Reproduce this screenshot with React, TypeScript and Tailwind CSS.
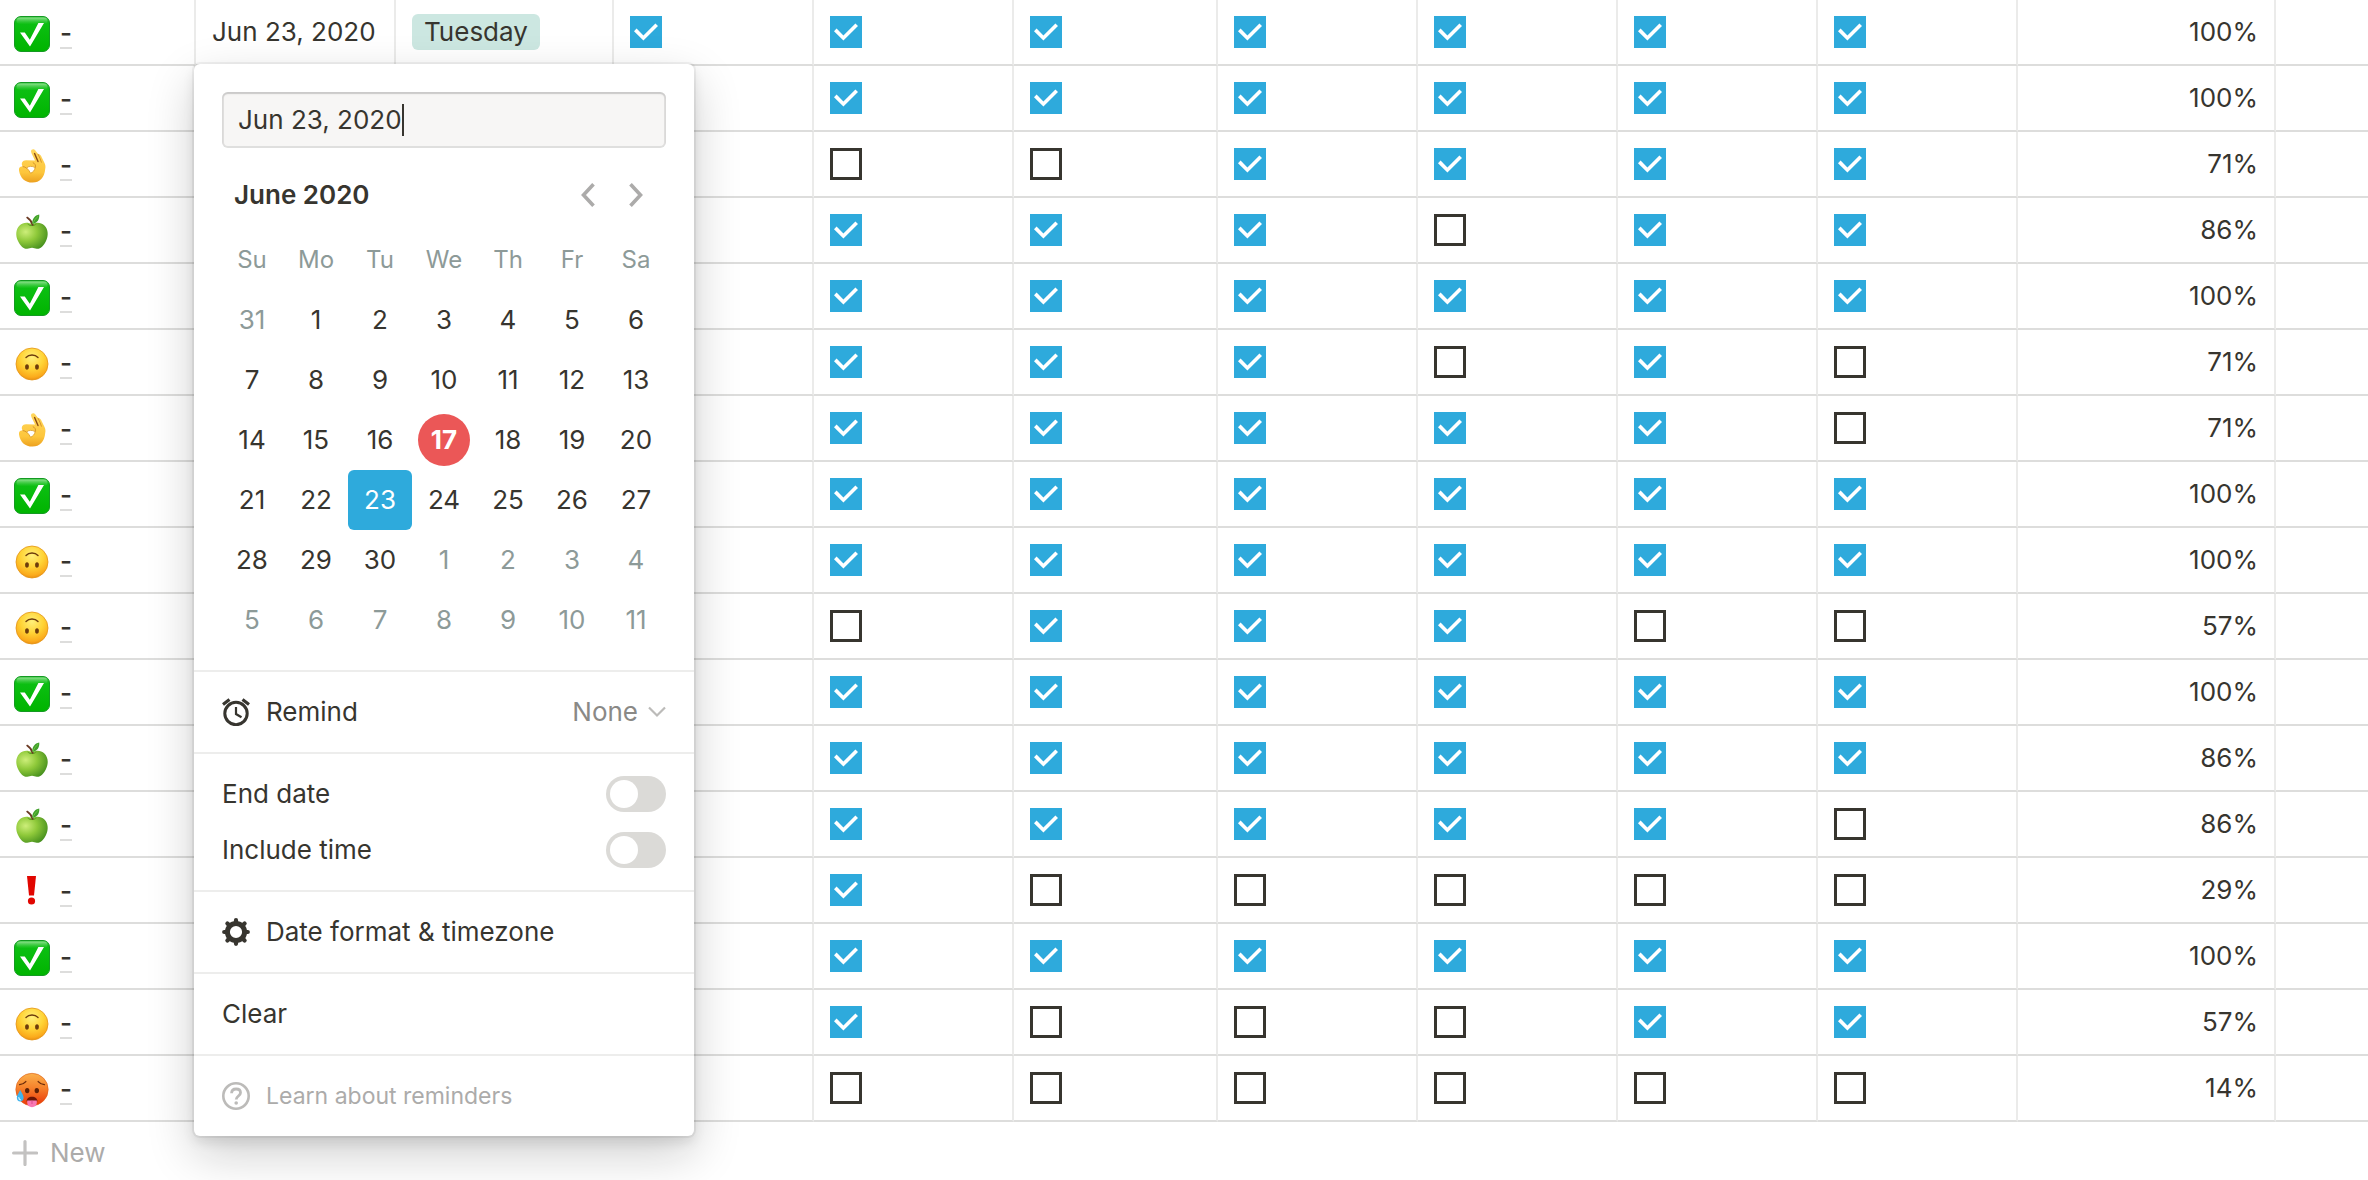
import type { ReactNode } from "react";

type Mood = "check" | "ok" | "apple" | "upside" | "bang" | "hot";

// One entry per table row: icon, seven habit boxes, progress.
const rows: { mood: Mood; habits: string; progress: string }[] = [
  { mood: "check", habits: "1111111", progress: "100%" },
  { mood: "check", habits: "1111111", progress: "100%" },
  { mood: "ok", habits: "1001111", progress: "71%" },
  { mood: "apple", habits: "1111011", progress: "86%" },
  { mood: "check", habits: "1111111", progress: "100%" },
  { mood: "upside", habits: "1111010", progress: "71%" },
  { mood: "ok", habits: "0111110", progress: "71%" },
  { mood: "check", habits: "1111111", progress: "100%" },
  { mood: "upside", habits: "1111111", progress: "100%" },
  { mood: "upside", habits: "1011100", progress: "57%" },
  { mood: "check", habits: "1111111", progress: "100%" },
  { mood: "apple", habits: "0111111", progress: "86%" },
  { mood: "apple", habits: "1111110", progress: "86%" },
  { mood: "bang", habits: "1100000", progress: "29%" },
  { mood: "check", habits: "1111111", progress: "100%" },
  { mood: "upside", habits: "1100011", progress: "57%" },
  { mood: "hot", habits: "1000000", progress: "14%" },
];

const weekdays = ["Su", "Mo", "Tu", "We", "Th", "Fr", "Sa"];

const days = [
  { day: 31, outside: true },
  ...Array.from({ length: 30 }, (_, i) => ({ day: i + 1, outside: false })),
  ...Array.from({ length: 11 }, (_, i) => ({ day: i + 1, outside: true })),
];

function EmojiDefs() {
  return (
    <svg className="absolute h-0 w-0" aria-hidden="true">
      <defs>
        <linearGradient id="green" x1="0" y1="0" x2="0" y2="1">
          <stop offset="0" stopColor="#2fc437" />
          <stop offset="0.2" stopColor="#0cbf12" />
          <stop offset="1" stopColor="#00b400" />
        </linearGradient>
        <linearGradient id="gloss" x1="0" y1="0" x2="0" y2="1">
          <stop offset="0" stopColor="#8fe08f" />
          <stop offset="1" stopColor="#2ac72e" stopOpacity="0.2" />
        </linearGradient>
        <radialGradient id="face" cx="0.5" cy="0.3" r="0.72">
          <stop offset="0" stopColor="#fff07a" />
          <stop offset="0.5" stopColor="#ffd335" />
          <stop offset="0.85" stopColor="#fbab1c" />
          <stop offset="1" stopColor="#e88a10" />
        </radialGradient>
        <linearGradient id="heat" x1="0" y1="0" x2="0" y2="1">
          <stop offset="0" stopColor="#fbb04c" />
          <stop offset="0.45" stopColor="#f6822c" />
          <stop offset="1" stopColor="#ea3408" />
        </linearGradient>
        <radialGradient id="apple" cx="0.3" cy="0.35" r="0.8">
          <stop offset="0" stopColor="#cdee7a" />
          <stop offset="0.45" stopColor="#8fc93a" />
          <stop offset="1" stopColor="#3f8a1b" />
        </radialGradient>
        <linearGradient id="hand" x1="0" y1="0" x2="0" y2="1">
          <stop offset="0" stopColor="#ffd75e" />
          <stop offset="0.7" stopColor="#fdc63c" />
          <stop offset="1" stopColor="#eca01f" />
        </linearGradient>
      </defs>
    </svg>
  );
}

function Emoji({ mood }: { mood: Mood }) {
  return (
    <svg viewBox="0 0 36 36" className="h-9 w-9 shrink-0" aria-hidden="true">
      {mood === "check" && (
        <>
          <rect x="0.5" y="0.5" width="35" height="35" rx="6.5" fill="url(#green)" stroke="#149a22" />
          <rect x="2.5" y="1.5" width="31" height="6.5" rx="4" fill="url(#gloss)" />
          <path d="M6 16.5h4.8l5 7.2L24.4 7H30L16 30.5z" fill="#fff" />
        </>
      )}
      {mood === "ok" && (
        <>
          <path
            d="M17 3.2C17 1 20 .4 21.4 2.4L24 6c2 0 3 1.4 3.8 3.4l2.6 5.4c1 2 1.4 4 .8 6.2C30.6 29.4 25.6 34.6 18.6 34.6 11 34.6 6.2 30 5 22.4 4.600 19.8 6.4 18 8.8 18.6 6.600 15.6 8.4 12.2 12 12.2L21 12.6 17.4 5z"
            fill="url(#hand)"
          />
          <path d="M12.6 20c2-2 5.4-2.2 8.600-.4-.6 3-2.4 4.800-4.600 5.600-1-2-2.400-3.800-4-5.200z" fill="#fff" stroke="#d99a26" strokeWidth="0.8" />
          <path d="M9 18.600c1.400.2 2.400.6 3.400 1.400M21.400 19.400c.6-2-.2-3.800-2.200-4.600M24 6.200c1.400 2.600 2.600 5.200 3.400 8" fill="none" stroke="#d9952a" strokeLinecap="round" />
          <path d="M20.6 5.600l3.400 8" stroke="#8a4a12" strokeWidth="1.4" strokeLinecap="round" />
        </>
      )}
      {mood === "apple" && (
        <>
          <path
            d="M18 10.2c3.4-2 9-2.200 12.400 1.200C34.4 15.4 34.6 21.6 32 27c-2 4.400-5.200 8-9.200 7.800-1.800-.2-3-1-4.800-1s-3 .8-4.800 1C9.200 35 6 31.400 4 27 1.400 21.600 1.600 15.400 5.600 11.400c3.400-3.400 9-3.200 12.400-1.200z"
            fill="url(#apple)"
          />
          <path d="M13 9.2c2.800 2 7.200 2 10 0-1 2.200-3 2.800-5 2.800s-4-.6-5-2.800z" fill="#5a9c22" />
          <path d="M18.6 10.8c-.8-3-2.800-5.400-5.400-7.200" fill="none" stroke="#6b3a24" strokeWidth="1.8" strokeLinecap="round" />
          <path d="M18.4 10c-.6-5 2.400-8.600 6.800-9.400.6 4.600-1.800 8.600-6.800 9.400z" fill="#3fa02a" />
          <path d="M18.8 9.6c1.200-3 3-5.400 5.400-7.400" fill="none" stroke="#7cca4a" strokeWidth="0.8" />
        </>
      )}
      {mood === "upside" && (
        <>
          <circle cx="18" cy="18" r="16" fill="url(#face)" stroke="#e39416" strokeWidth="0.8" />
          <path d="M12 11.4c3-3.2 9-3.2 12 0" fill="none" stroke="#6d3c0c" strokeWidth="1.4" strokeLinecap="round" />
          <ellipse cx="13" cy="21" rx="1.9" ry="2.8" fill="#6d3c0c" />
          <ellipse cx="23" cy="21" rx="1.9" ry="2.8" fill="#6d3c0c" />
        </>
      )}
      {mood === "bang" && (
        <>
          <path d="M13 2h9l-2 19.6h-5z" fill="#e10600" />
          <circle cx="17.5" cy="27" r="3.6" fill="#e10600" />
        </>
      )}
      {mood === "hot" && (
        <>
          <circle cx="18" cy="17.5" r="16.2" fill="url(#heat)" stroke="#dc5a14" strokeWidth="0.6" />
          <path d="M5.6 12.6c2.4-.2 4.6-1.2 6.2-3M30.4 12.6c-2.4-.2-4.6-1.2-6.2-3" fill="none" stroke="#6b2a0a" strokeWidth="1.4" strokeLinecap="round" />
          <ellipse cx="13.2" cy="18.6" rx="2.2" ry="2.7" fill="#5d2106" />
          <ellipse cx="22.8" cy="18.6" rx="2.2" ry="2.7" fill="#5d2106" />
          <path d="M12.6 29.5c0-3 2.2-4.7 5.4-4.7s5.4 1.7 5.4 4.7z" fill="#6a1606" />
          <path d="M13.2 28.4h9.6v2.4c0 2.6-2 4.4-4.8 4.4s-4.8-1.8-4.8-4.4z" fill="#f878b4" />
          <path d="M18 28.6v3.4" stroke="#d94c8e" />
          <path d="M6.2 18c1.8 3.2 3.4 5.4 3.4 7.8 0 2.4-1.4 3.8-3.4 3.8s-3.4-1.4-3.4-3.8c0-2.4 1.8-4.6 3.4-7.8z" fill="#41b4ec" />
          <path d="M4.8 25.6c0 1.4.6 2 1.6 2.2" fill="none" stroke="#d6f2ff" strokeWidth="1.2" strokeLinecap="round" />
        </>
      )}
    </svg>
  );
}

function CheckBox({ checked, label }: { checked: boolean; label: string }) {
  return (
    <span className="grid h-8 w-8 place-items-center">
      <input
        type="checkbox"
        aria-label={label}
        defaultChecked={checked}
        className="peer col-start-1 row-start-1 h-8 w-8 appearance-none border-3 border-[#37352f] bg-white checked:border-0 checked:bg-[#2eaadc]"
      />
      <svg
        viewBox="0 0 14 14"
        className="pointer-events-none invisible z-0 col-start-1 row-start-1 h-6 w-6 fill-white peer-checked:visible"
        aria-hidden="true"
      >
        <polygon points="5.5 12 14 3.5 12.5 2 5.5 9 1.5 5 0 6.5" />
      </svg>
    </span>
  );
}

function Cell({ children }: { children?: ReactNode }) {
  return (
    <td className="border-r-2 border-b-2 border-r-[#ebebea] border-b-[#dddddc] px-4 py-0 align-middle">
      {children}
    </td>
  );
}

function HabitTable() {
  return (
    <table className="w-full table-fixed border-separate border-spacing-0">
      <colgroup>
        <col className="w-[196px]" />
        <col className="w-[200px]" />
        <col className="w-[218px]" />
        <col className="w-[200px]" />
        <col className="w-[200px]" />
        <col className="w-[204px]" />
        <col className="w-[200px]" />
        <col className="w-[200px]" />
        <col className="w-[200px]" />
        <col className="w-[200px]" />
        <col className="w-[258px]" />
        <col />
      </colgroup>
      <tbody>
        {rows.map((row, r) => (
          <tr key={r} className="h-[66px]">
            <Cell>
              <a href="#" className="flex items-center gap-2.5 pt-1">
                <span className="-ml-0.5">
                  <Emoji mood={row.mood} />
                </span>
                <span className="border-b-2 border-[#dddddc] leading-7 font-medium">-</span>
              </a>
            </Cell>
            <Cell>{r === 0 && <span className="whitespace-nowrap">Jun 23, 2020</span>}</Cell>
            <Cell>
              {r === 0 && (
                <span className="inline-flex h-9 items-center rounded-md bg-[#cce7e1] px-3">Tuesday</span>
              )}
            </Cell>
            {row.habits.split("").map((habit, h) => (
              <Cell key={h}>
                <CheckBox checked={habit === "1"} label={`Habit ${h + 1}, row ${r + 1}`} />
              </Cell>
            ))}
            <Cell>
              <div className="text-right">{row.progress}</div>
            </Cell>
            <td className="border-b-2 border-[#dddddc]" />
          </tr>
        ))}
      </tbody>
    </table>
  );
}

function Toggle({ label }: { label: string }) {
  return (
    <label className="flex items-center justify-between">
      {label}
      <input
        type="checkbox"
        role="switch"
        className="flex h-9 w-15 appearance-none items-center rounded-full bg-[#dbdad7] px-1 before:h-7 before:w-7 before:rounded-full before:bg-white checked:justify-end checked:bg-[#2eaadc]"
      />
    </label>
  );
}

function dayClass(day: number, outside: boolean) {
  if (outside) return "text-[#8d9a98]";
  if (day === 23) return "rounded-md bg-[#2eaadc] text-white";
  return "";
}

function Calendar() {
  return (
    <div className="px-[26px] pb-5">
      <div className="flex h-[82px] items-center justify-between pt-3 pl-3.5">
        <h2 className="font-semibold">June 2020</h2>
        <div className="flex pr-2">
          <button type="button" aria-label="Previous month" className="flex h-12 w-12 items-center justify-center">
            <svg viewBox="0 0 14 24" className="h-6 w-3.5" fill="none" stroke="#acabaa" strokeWidth="3.6">
              <path d="M12.5 1.2L2.5 12l10 10.8" />
            </svg>
          </button>
          <button type="button" aria-label="Next month" className="flex h-12 w-12 items-center justify-center">
            <svg viewBox="0 0 14 24" className="h-6 w-3.5" fill="none" stroke="#acabaa" strokeWidth="3.6">
              <path d="M1.5 1.2l10 10.8-10 10.8" />
            </svg>
          </button>
        </div>
      </div>
      <div className="grid grid-cols-7 text-center">
        {weekdays.map((name) => (
          <div key={name} className="text-2xl leading-[60px] text-[#8d9a98]">
            {name}
          </div>
        ))}
        {days.map(({ day, outside }, i) => (
          <button key={i} type="button" className={`flex h-15 items-center justify-center ${dayClass(day, outside)}`}>
            {day === 17 ? (
              <span className="flex h-[52px] w-[52px] items-center justify-center rounded-full bg-[#eb5757] font-bold text-white">
                17
              </span>
            ) : (
              day
            )}
          </button>
        ))}
      </div>
    </div>
  );
}

function DatePicker() {
  return (
    <div
      role="dialog"
      aria-label="Edit date"
      className="absolute top-16 left-[194px] w-[500px] rounded-md bg-white shadow-[0_0_0_2px_rgba(15,15,15,0.05),0_6px_12px_rgba(15,15,15,0.1),0_18px_48px_rgba(15,15,15,0.2)]"
    >
      <div className="px-7 pt-7">
        <div className="flex h-14 items-center rounded-md bg-[#f7f6f5] px-4 shadow-[inset_0_0_0_2px_rgba(15,15,15,0.1),inset_0_2px_2px_rgba(15,15,15,0.1)]">
          <input
            aria-label="Date"
            defaultValue="Jun 23, 2020"
            className="field-sizing-content min-w-0 bg-transparent outline-none"
          />
          <span className="h-8 w-0.5 bg-[#37352f]" />
        </div>
      </div>
      <Calendar />
      <div className="flex h-[82px] items-center border-t-2 border-[#ededec] px-7">
        <svg viewBox="0 0 28 28" className="mr-4 h-7 w-7" fill="none" stroke="#37352f" aria-hidden="true">
          <circle cx="14" cy="15.5" r="11.2" strokeWidth="3" />
          <path d="M14 9v7l5.500 3.2" strokeWidth="2.2" />
          <path d="M1 6.5l6.5-5M27 6.5l-6.5-5" strokeWidth="3.2" />
        </svg>
        <label htmlFor="remind" className="flex-1">
          Remind
        </label>
        <select id="remind" className="field-sizing-content appearance-none bg-transparent text-[#8a8986]">
          <option>None</option>
        </select>
        <svg viewBox="0 0 18 12" className="ml-2.5 h-3 w-4.5" fill="none" stroke="#bcbbb9" strokeWidth="2.2" aria-hidden="true">
          <path d="M1 1.5l8 8 8-8" />
        </svg>
      </div>
      <div className="flex flex-col gap-5 border-t-2 border-[#ededec] px-7 py-[22px]">
        <Toggle label="End date" />
        <Toggle label="Include time" />
      </div>
      <button type="button" className="flex h-[82px] w-full items-center gap-4 border-t-2 border-[#ededec] px-7">
        <svg viewBox="0 0 28 28" className="h-7 w-7" aria-hidden="true">
          <circle cx="14" cy="14" r="8.6" fill="none" stroke="#37352f" strokeWidth="5" />
          <path
            d="M14 2.2v3M14 22.8v3M2.2 14h3M22.8 14h3M5.4 5.4l2.4 2.4M20.2 20.2l2.4 2.4M5.4 22.6l2.4-2.4M20.2 7.8l2.4-2.4"
            stroke="#37352f"
            strokeWidth="4.2"
            strokeLinecap="round"
          />
        </svg>
        Date format &amp; timezone
      </button>
      <button type="button" className="flex h-[82px] w-full items-center border-t-2 border-[#ededec] px-7">
        Clear
      </button>
      <a href="#" className="flex h-[82px] items-center gap-4 border-t-2 border-[#ededec] px-7 text-[23px] text-[#acabaa]">
        <svg viewBox="0 0 28 28" className="h-7 w-7" fill="none" stroke="#bcbbb9" aria-hidden="true">
          <circle cx="14" cy="14" r="12.7" strokeWidth="2.6" />
          <path d="M9.6 11.2c0-2.7 1.8-4.2 4.5-4.2s4.4 1.5 4.4 3.8c0 3.2-4.3 3.3-4.3 6.800" strokeWidth="2.8" />
          <circle cx="14.2" cy="21" r="1.8" fill="#bcbbb9" stroke="none" />
        </svg>
        Learn about reminders
      </a>
    </div>
  );
}

export default function App() {
  return (
    <main className="relative min-h-screen overflow-hidden bg-white font-['Inter',sans-serif] text-[26px] leading-8 text-[#37352f]">
      <EmojiDefs />
      <HabitTable />
      <button type="button" className="flex h-[58px] w-full items-center gap-3 px-3 pt-1 text-[#acabaa]">
        <svg viewBox="0 0 26 26" className="h-6.5 w-6.5" stroke="#c3c2c1" strokeWidth="3.2" strokeLinecap="round" aria-hidden="true">
          <path d="M13 1.6v23M1.6 13h23" />
        </svg>
        New
      </button>
      <DatePicker />
    </main>
  );
}
